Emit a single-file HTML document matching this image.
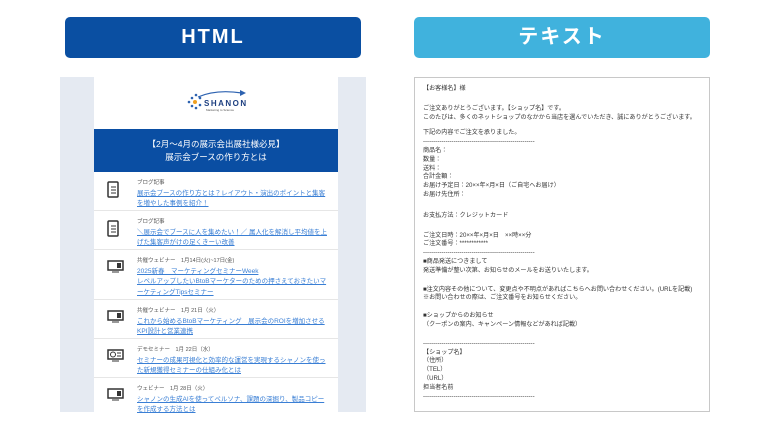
<!DOCTYPE html>
<html><head><meta charset="utf-8"><style>
*{margin:0;padding:0;box-sizing:border-box}
body{width:768px;height:432px;background:#fff;position:relative;overflow:hidden;font-family:"Liberation Sans","Noto Sans CJK JP",sans-serif}
.btn{position:absolute;top:17px;height:41px;border-radius:5px;color:#fff;font-weight:bold;font-size:20px;text-align:center;line-height:41px;letter-spacing:2px}
#lp{position:absolute;left:60px;top:77px;width:306px;height:335px;background:#e5eaf2}
#lc{position:absolute;left:34px;top:0;width:244px;height:335px;background:#fff}
.hd{position:absolute;left:0;top:52px;width:244px;height:43px;background:#0a4ea3;color:#fff;font-size:8.5px;text-align:center;padding-top:9px;line-height:13px}
.it{position:absolute;left:0;width:244px;border-bottom:1px solid #e6e6e6}
.it .ic{position:absolute;left:13px}
.it .tx{position:absolute;left:43px;top:6px;right:8px;font-size:5.5px;line-height:10.5px;color:#555}
.it .tx a{display:block;color:#3a7fd5;text-decoration:underline;font-size:6.5px;line-height:10.5px}
#rp{position:absolute;left:414px;top:77px;width:296px;height:335px;border:1.5px solid #c8c8c8;padding:7px 8px;font-size:6.1px;line-height:8.8px;color:#333;white-space:nowrap}
#rp div{height:8.8px}
#rp .b{height:11px}
</style></head><body>
<div class="btn" style="left:65px;width:296px;background:#0a4fa2">HTML</div>
<div class="btn" style="left:414px;width:296px;background:#40b2dd">テキスト</div>
<div id="lp"><div id="lc">
<svg style="position:absolute;left:92px;top:12px" width="66" height="26" viewBox="0 0 66 26">
<g fill="#2d62b0"><circle cx="6" cy="9" r="1.3"/><circle cx="10" cy="6" r="1.3"/><circle cx="3" cy="13" r="1.3"/><circle cx="6" cy="17" r="1.3"/><circle cx="10" cy="19" r="1.3"/><circle cx="14" cy="16" r="1.3"/><circle cx="14" cy="9" r="1.3"/></g>
<circle cx="9" cy="13" r="2" fill="#f0a020"/>
<path d="M12 8 Q30 0 56 4" stroke="#2d62b0" stroke-width="1.2" fill="none"/><path d="M54 1 L60 4 L54 7Z" fill="#2d62b0"/>
<text x="18" y="17" font-size="8" font-weight="bold" fill="#1d3f80" letter-spacing="1.5" font-family="Liberation Sans">SHANON</text>
<text x="20" y="22" font-size="3" fill="#555" font-family="Liberation Sans">Marketing to Science</text></svg>
<div class="hd">【2月～4月の展示会出展社様必見】<br>展示会ブースの作り方とは</div>
<div class="it" style="top:95px;height:39px"><svg class="ic" style="top:9px" width="12" height="17"><rect x="1" y="1" width="10" height="15" rx="1" fill="none" stroke="#333" stroke-width="1.5"/><g stroke="#333"><line x1="4" y1="6" x2="9" y2="6"/><line x1="4" y1="9" x2="9" y2="9"/><line x1="4" y1="12" x2="9" y2="12"/></g></svg><div class="tx">ブログ記事<a>展示会ブースの作り方とは？レイアウト・演出のポイントと集客を増やした事例を紹介！</a></div></div>
<div class="it" style="top:134px;height:39px"><svg class="ic" style="top:9px" width="12" height="17"><rect x="1" y="1" width="10" height="15" rx="1" fill="none" stroke="#333" stroke-width="1.5"/><g stroke="#333"><line x1="4" y1="6" x2="9" y2="6"/><line x1="4" y1="9" x2="9" y2="9"/><line x1="4" y1="12" x2="9" y2="12"/></g></svg><div class="tx">ブログ記事<a>＼展示会でブースに人を集めたい！／ 属人化を解消し平均値を上げた集客声がけの足くきーい改善</a></div></div>
<div class="it" style="top:173px;height:50px"><svg class="ic" style="top:10px" width="17" height="13"><rect x="1" y="1" width="15" height="9" fill="none" stroke="#333" stroke-width="1.5"/><rect x="10" y="3" width="4" height="5" fill="#333"/><line x1="5" y1="12" x2="12" y2="12" stroke="#333"/></svg><div class="tx">共催ウェビナー　1月14日(火)~17日(金)<a>2025新春　マーケティングセミナーWeek<br>レベルアップしたいBtoBマーケターのための押さえておきたいマーケティングTipsセミナー</a></div></div>
<div class="it" style="top:223px;height:39px"><svg class="ic" style="top:10px" width="17" height="13"><rect x="1" y="1" width="15" height="9" fill="none" stroke="#333" stroke-width="1.5"/><rect x="10" y="3" width="4" height="5" fill="#333"/><line x1="5" y1="12" x2="12" y2="12" stroke="#333"/></svg><div class="tx">共催ウェビナー　1月 21日（火）<a>これから始めるBtoBマーケティング　展示会のROIを増加させるKPI設計と営業連携</a></div></div>
<div class="it" style="top:262px;height:39px"><svg class="ic" style="top:10px" width="17" height="13"><rect x="1" y="1" width="15" height="9" fill="none" stroke="#333" stroke-width="1.5"/><circle cx="6" cy="5.5" r="2.5" fill="none" stroke="#333"/><line x1="10" y1="4" x2="14" y2="4" stroke="#333"/><line x1="10" y1="7" x2="14" y2="7" stroke="#333"/><line x1="5" y1="12" x2="12" y2="12" stroke="#333"/></svg><div class="tx">デモセミナー　1月 22日（水）<a>セミナーの成果可視化と効率的な運営を実現するシャノンを使った新規獲得セミナーの仕組み化とは</a></div></div>
<div class="it" style="top:301px;height:34px;border:none"><svg class="ic" style="top:10px" width="17" height="13"><rect x="1" y="1" width="15" height="9" fill="none" stroke="#333" stroke-width="1.5"/><rect x="10" y="3" width="4" height="5" fill="#333"/><line x1="5" y1="12" x2="12" y2="12" stroke="#333"/></svg><div class="tx">ウェビナー　1月 28日（火）<a>シャノンの生成AIを使ってペルソナ、課題の深掘り、製品コピーを作成する方法とは</a></div></div>
</div></div>
<div id="rp">
<div>【お客様名】様</div><div class="b"></div>
<div>ご注文ありがとうございます。【ショップ名】です。</div>
<div>このたびは、多くのネットショップのなかから当店を選んでいただき、誠にありがとうございます。</div><div class="b" style="height:7px"></div>
<div>下記の内容でご注文を承りました。</div>
<div>-------------------------------------------------------</div>
<div>商品名：</div><div>数量：</div><div>送料：</div><div>合計金額：</div>
<div>お届け予定日：20××年×月×日（ご自宅へお届け）</div>
<div>お届け先住所：</div><div class="b" style="height:12px"></div>
<div>お支払方法：クレジットカード</div><div class="b"></div>
<div>ご注文日時：20××年×月×日　××時××分</div>
<div>ご注文番号：************</div>
<div>-------------------------------------------------------</div>
<div>■商品発送につきまして</div>
<div>発送準備が整い次第、お知らせのメールをお送りいたします。</div><div class="b" style="height:10px"></div>
<div>■注文内容その他について、変更点や不明点があればこちらへお問い合わせください。(URLを記載)</div>
<div>※お問い合わせの際は、ご注文番号をお知らせください。</div><div class="b" style="height:9px"></div>
<div>■ショップからのお知らせ</div>
<div>（クーポンの案内、キャンペーン情報などがあれば記載）</div><div class="b" style="height:10px"></div>
<div>-------------------------------------------------------</div>
<div>【ショップ名】</div><div>（住所）</div><div>（TEL）</div><div>（URL）</div><div>担当者名前</div>
<div>-------------------------------------------------------</div>
</div>
</body></html>
